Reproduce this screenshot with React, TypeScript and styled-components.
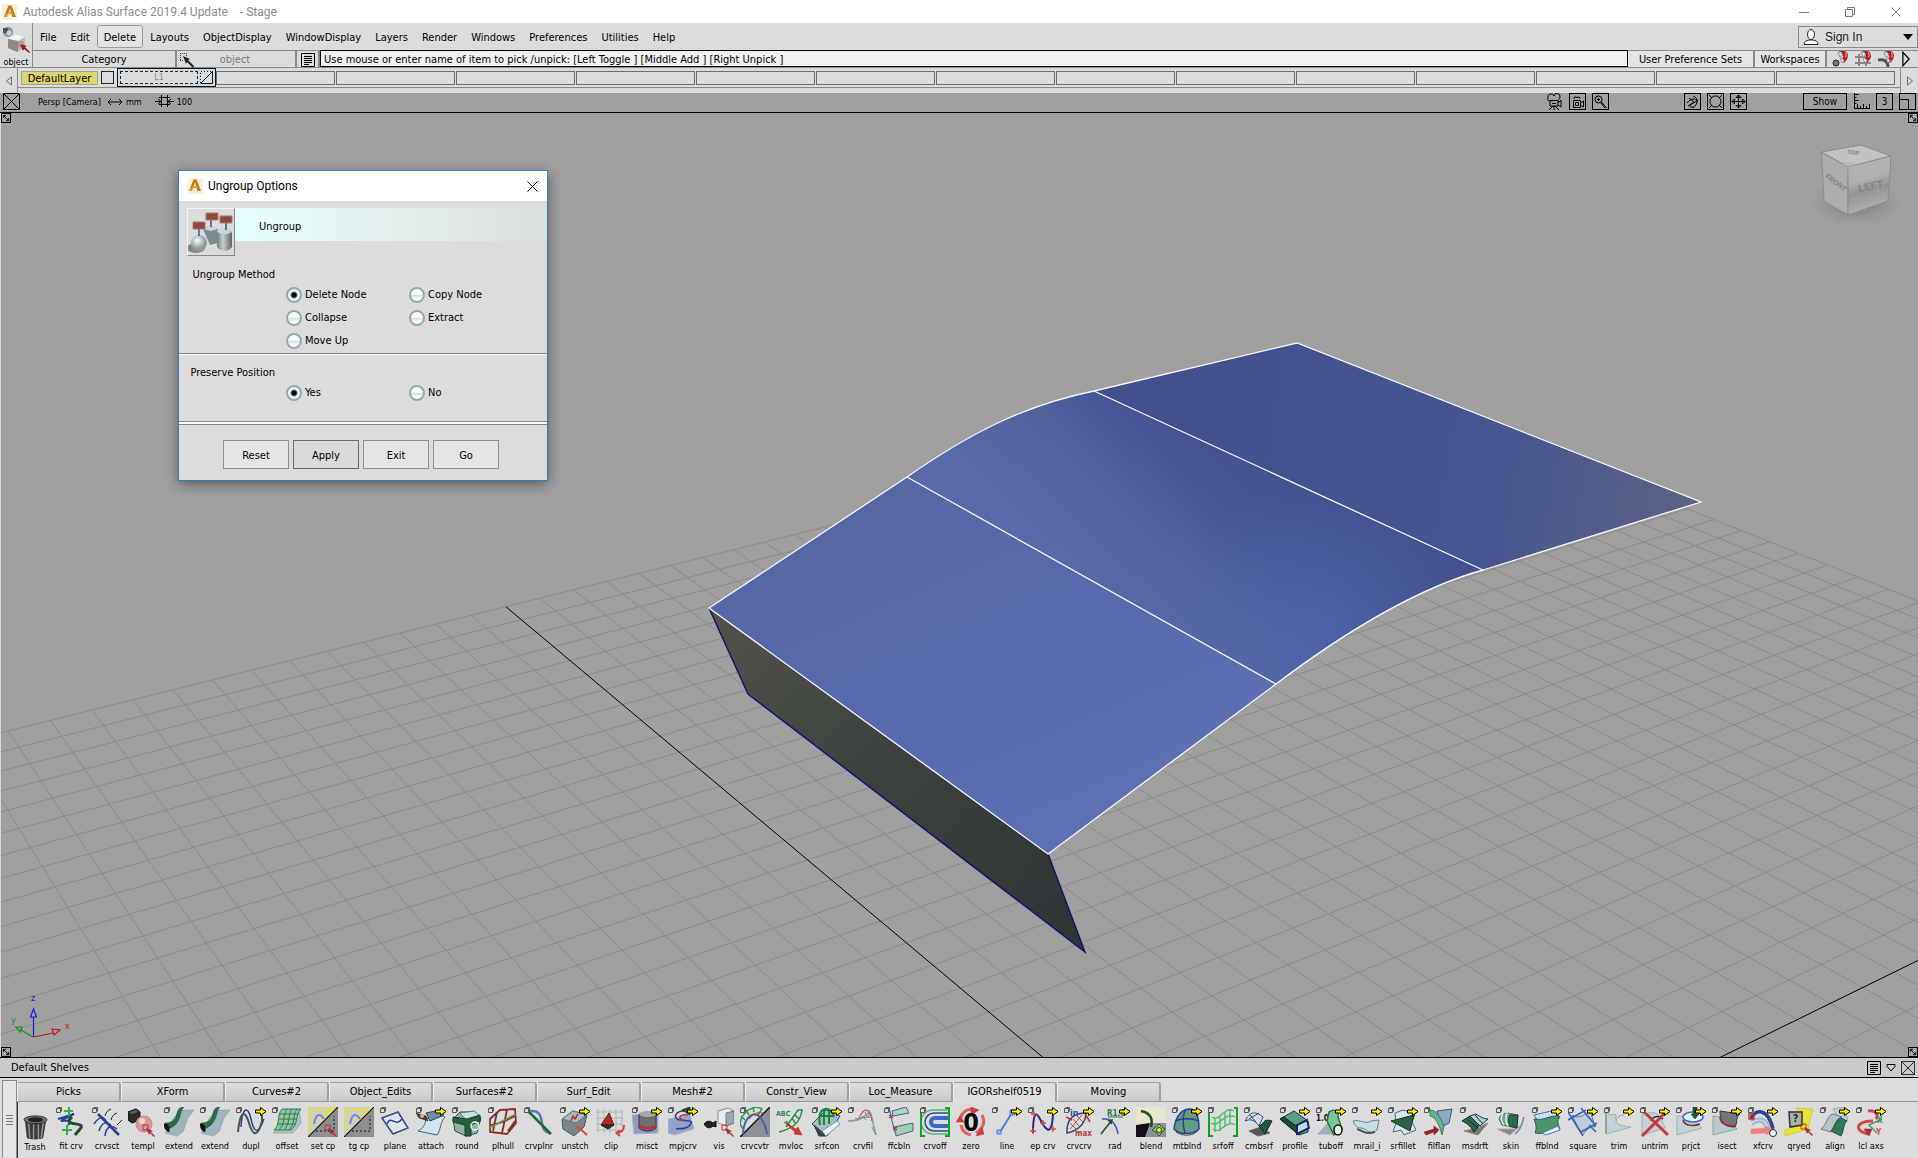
import React from "react";
import styled, { createGlobalStyle, css } from "styled-components";

const UI = `"DejaVu Sans Condensed", "DejaVu Sans", sans-serif`;
const TITLE = `Roboto, "Open Sans", sans-serif`;

const Global = createGlobalStyle`
  * { box-sizing: border-box; }
  html, body { margin: 0; padding: 0; }
  body { font: 11px/14px ${UI}; color: #000; background: #dcdcdc; }
  button, input { font: inherit; color: inherit; border-radius: 0; margin: 0; }
  button { padding: 0; background: none; border: 0; }
  svg { display: block; flex: none; }
`;

const App_ = styled.div`
  display: flex;
  flex-direction: column;
  height: 100vh;
  overflow: hidden;
`;

/* ---------- window title ---------- */
const TitleBar = styled.header`
  display: flex;
  align-items: center;
  height: 23px;
  padding: 0 2px;
  gap: 5px;
  background: #fff;
  flex: none;
`;
const Title = styled.h1<{ $dark?: boolean }>`
  margin: 0;
  flex: 1;
  font: 12px/16px ${TITLE};
  white-space: pre;
  color: ${(p) => (p.$dark ? "#000" : "#8c8c8c")};
`;
const WindowButton = styled.button`
  display: flex;
  align-items: center;
  justify-content: center;
  width: 41px;
  height: 20px;
`;

/* ---------- menu and prompt rows ---------- */
const TopArea = styled.div`
  display: flex;
  height: 45px;
  flex: none;
  background: #dcdcdc;
  border-bottom: 1px solid #8a8a8a;
`;
const PickTool = styled.button`
  display: flex;
  flex-direction: column;
  align-items: center;
  justify-content: space-between;
  width: 33px;
  padding: 2px 0 0;
  font-size: 9px;
  line-height: 10px;
  border-right: 1px solid #8a8a8a;
`;
const Rows = styled.div`
  display: flex;
  flex-direction: column;
  flex: 1;
  min-width: 0;
`;
const MenuRow = styled.nav`
  display: flex;
  align-items: center;
  justify-content: space-between;
  height: 27px;
`;
const MenuList = styled.div`
  display: flex;
`;
const MenuItem = styled.button<{ $hot?: boolean }>`
  height: 23px;
  padding: 2px 6px 0;
  border: 1px solid transparent;
  border-radius: 3px;
  ${(p) =>
    p.$hot &&
    css`
      background: #e4e4e4;
      border-color: #9a9a9a;
    `}
`;
const SignIn = styled.button`
  display: flex;
  align-items: center;
  gap: 6px;
  width: 120px;
  height: 22px;
  padding: 0 4px;
  font: 12px/16px "Liberation Sans", Arial, sans-serif;
  border: 1px solid #8a8a8a;
  color: #222;
  span { flex: 1; text-align: left; }
`;
const PromptRow = styled.div`
  display: flex;
  flex: 1;
  min-height: 0;
`;
const PromptCell = styled.button<{ $w: number; $dim?: boolean; $lit?: boolean }>`
  display: flex;
  align-items: center;
  justify-content: center;
  width: ${(p) => p.$w}px;
  flex: none;
  padding: 2px 0 0;
  border-top: 1px solid #8a8a8a;
  border-right: 2px solid #8a8a8a;
  color: ${(p) => (p.$dim ? "#7a7a7a" : "#000")};
  background: ${(p) => (p.$lit ? "#e5e5e5" : "transparent")};
  svg { margin: 0 2px; }
  span { flex: 1; padding-right: 22px; }
`;
const PromptInput = styled.input`
  flex: 1;
  min-width: 0;
  padding: 2px 3px 0;
  border: 1px solid #000;
  background: #f1f1f1;
`;
const SnapGroup = styled.div`
  display: flex;
  align-items: center;
  gap: 5px;
  width: 91px;
  padding: 0 5px;
  border-top: 1px solid #8a8a8a;
`;

/* ---------- layer row ---------- */
const LayerRow = styled.div`
  display: flex;
  height: 25px;
  flex: none;
  background: #dcdcdc;
`;
const Scroller = styled.button<{ $right?: boolean }>`
  display: flex;
  align-items: center;
  justify-content: center;
  width: 18px;
  flex: none;
  border: 0 solid #8a8a8a;
  border-width: ${(p) => (p.$right ? "0 0 0 1px" : "0 1px 0 0")};
`;
const Layers = styled.div`
  display: flex;
  align-items: center;
  flex: 1;
  min-width: 0;
  height: 20px;
  padding: 0 4px 0 3px;
  border-bottom: 1px solid #8a8a8a;
`;
const DefaultLayer = styled.button`
  width: 77px;
  height: 14px;
  padding-top: 1px;
  line-height: 11px;
  background: #dcd66c;
  border: 1px solid #a0a0a0;
`;
const LayerCheck = styled.input`
  appearance: none;
  width: 13px;
  height: 13px;
  margin: 0 3px;
  border: 1px solid #222;
  flex: none;
`;
const ActiveLayer = styled.button`
  display: flex;
  width: 99px;
  height: 19px;
  padding: 2px;
  flex: none;
  border: 1px solid #111;
  background: #c3dbee;
  color: #8a8a8a;
  font-size: 9px;
  span {
    flex: 1;
    line-height: 11px;
    background: #dcdcdc;
    border: 1px dashed #222;
  }
  svg { background: #dcdcdc; margin-left: 2px; }
`;
const LayerSlot = styled.button`
  flex: 1;
  height: 14px;
  margin-right: 1px;
  border: 1px solid #6e6e6e;
`;

/* ---------- viewport ---------- */
const ViewHeader = styled.div`
  display: flex;
  align-items: center;
  height: 20px;
  padding: 0 2px 2px 3px;
  flex: none;
  font-size: 9px;
  background: #a0a0a0;
  border-bottom: 1px solid #000;
`;
const ViewInfo = styled.div`
  display: flex;
  align-items: center;
  flex: 1;
  gap: 3px;
  padding-left: 18px;
`;
const InfoText = styled.span<{ $gap?: boolean }>`
  margin-right: ${(p) => (p.$gap ? 10 : 3)}px;
`;
const ToolSet = styled.div<{ $space: number }>`
  display: flex;
  gap: 6px;
  margin-right: ${(p) => p.$space}px;
`;
const ViewButton = styled.button<{ $w?: number; $bare?: boolean }>`
  display: flex;
  align-items: center;
  justify-content: center;
  width: ${(p) => p.$w ?? 17}px;
  height: 17px;
  font-size: 10px;
  border: ${(p) => (p.$bare ? "0" : "1px solid #000")};
`;
const Stage = styled.main`
  position: relative;
  flex: 1;
  min-height: 0;
  background: #a0a0a0;
  border-left: 1px solid #d8d8d8;
`;
const Scene = styled.svg`
  width: 100%;
  height: 100%;
`;
const Corner = styled.button<{ $v: "top" | "bottom"; $h: "left" | "right" }>`
  position: absolute;
  ${(p) => p.$v}: 0;
  ${(p) => p.$h}: 0;
  border: 1px solid #000;
  background: #a8a8a8;
`;
const CubeHolder = styled.div`
  position: absolute;
  top: 17px;
  right: 10px;
`;

/* ---------- dialog ---------- */
const Dialog = styled.section`
  position: absolute;
  left: 177px;
  top: 57px;
  width: 370px;
  border: 1px solid #2f7fc0;
  background: #dcdcdc;
  box-shadow: 0 3px 12px rgba(0, 0, 0, 0.45);
`;
const DialogTitle = styled.header`
  display: flex;
  align-items: center;
  height: 30px;
  gap: 5px;
  padding: 0 0 0 8px;
  background: #fff;
`;
const DialogClose = styled.button`
  display: flex;
  justify-content: center;
  width: 30px;
`;
const Banner = styled.div`
  display: flex;
  height: 56px;
  padding: 7px 0 0 8px;
`;
const ToolTile = styled.div`
  width: 48px;
  height: 48px;
  border: 1px solid;
  border-color: #f4f4f4 #8a8a8a #8a8a8a #f4f4f4;
`;
const BannerText = styled.h2`
  flex: 1;
  height: 33px;
  margin: 0;
  padding: 0 24px;
  font: 11px/38px ${UI};
  background: linear-gradient(90deg, #e6fffe, #e4eeed 50%, #dcdede);
`;
const Options = styled.fieldset<{ $h: number }>`
  display: grid;
  grid-template-columns: 107px 123px 1fr;
  grid-template-rows: 16px;
  grid-auto-rows: 23px;
  height: ${(p) => p.$h}px;
  margin: 0;
  min-width: 0;
  padding: 10px 0 0;
  border: 0;
  legend {
    grid-column: 1 / -1;
    float: left;
    width: 96px;
    padding: 0;
    line-height: 16px;
    text-align: right;
    white-space: nowrap;
  }
`;
const Choice = styled.label<{ $col: number }>`
  grid-column: ${(p) => p.$col};
  display: flex;
  align-items: center;
  gap: 3px;
  height: 23px;
  input {
    appearance: none;
    width: 16px;
    height: 16px;
    border: 2px solid #9aa6a9;
    border-radius: 50%;
    background: linear-gradient(#f4fbfb 45%, #cfdcdc 52%, #effcfb 75%);
  }
  input:checked {
    background: radial-gradient(circle, #000 2px, #e8f6f5 4px);
  }
`;
const Rule = styled.hr<{ $double?: boolean }>`
  height: ${(p) => (p.$double ? 4 : 2)}px;
  margin: 0;
  border: 0;
  border-top: 1px solid #858585;
  border-bottom: ${(p) => (p.$double ? "1px solid #858585" : "0")};
  background: #f4ffff;
`;
const Actions = styled.div`
  display: flex;
  gap: 4px;
  padding: 15px 48px 11px 44px;
`;
const ActionButton = styled.button<{ $on?: boolean }>`
  flex: 1;
  height: 29px;
  padding-top: 3px;
  border: 1px solid ${(p) => (p.$on ? "#6a6a6a" : "#8f8f8f")};
  background: ${(p) => (p.$on ? "#dadada" : "#e5e5e5")};
`;

/* ---------- shelves ---------- */
const ShelfTitle = styled.header`
  display: flex;
  align-items: center;
  height: 21px;
  padding: 0 3px 0 11px;
  gap: 5px;
  flex: none;
  background: #cbcbcb;
  border-top: 1px solid #000;
  border-bottom: 1px solid #000;
  h2 { flex: 1; margin: 0; font: inherit; }
`;
const Shelf = styled.div`
  display: flex;
  height: 80px;
  flex: none;
  padding: 2px 0 0 2px;
  background: #dcdcdc;
`;
const Grip = styled.div`
  display: flex;
  align-items: center;
  justify-content: center;
  width: 15px;
  border: 1px solid #8a8a8a;
  border-bottom: 0;
  background: #e4e4e4;
`;
const ShelfBody = styled.div`
  flex: 1;
  min-width: 0;
  padding-top: 2px;
`;
const Tabs = styled.div`
  display: flex;
  height: 20px;
  &::after {
    content: "";
    flex: 1;
    border-bottom: 1px solid #9a9a9a;
  }
`;
const Tab = styled.button<{ $on?: boolean }>`
  width: 104px;
  flex: none;
  border: 1px solid #a0a0a0;
  border-left-color: #f0f0f0;
  border-right-width: 2px;
  border-top-right-radius: 3px;
  border-bottom-color: ${(p) => (p.$on ? "transparent" : "#9a9a9a")};
  background: ${(p) => (p.$on ? "#dedede" : "linear-gradient(#dedede, #cacaca)")};
`;
const Tools = styled.div`
  display: flex;
  height: 56px;
  box-shadow: inset 1px 0 #333;
`;
const Tool = styled.button<{ $low?: boolean }>`
  display: flex;
  flex-direction: column;
  align-items: center;
  width: 36px;
  flex: none;
  gap: ${(p) => (p.$low ? 1 : 3)}px;
  padding-top: ${(p) => (p.$low ? 9 : 5)}px;
  font-size: 9px;
  line-height: 12px;
  white-space: nowrap;
`;

/* ---------- drawings ---------- */
const Logo = () => (
  <svg width="16" height="16" viewBox="0 0 16 16">
    <rect width="16" height="16" fill="#fdeedd" />
    <path d="M2 13 6.500 1.500h3L14 13h-3.500L9.500 10H7l2-2.500L8 4.500 5 13z" fill="#c67a14" />
    <path d="M2 13 6.500 8l3.500 0 1 2H7l-3.500 3z" fill="#efa733" />
  </svg>
);
const XIcon = ({ s = 11, c = "#000" }: { s?: number; c?: string }) => (
  <svg width={s} height={s} viewBox="0 0 11 11" stroke={c} fill="none">
    <path d="M.5.5l10 10M10.500.5l-10 10" />
  </svg>
);
const CrossBox = ({ s }: { s: number }) => (
  <svg width={s} height={s} viewBox="0 0 17 17" stroke="#000" fill="none">
    <path d="M.5.5h16v16H.5zM1 1l15 15M16 1 1 16" />
  </svg>
);
const ListIcon = () => (
  <svg width="14" height="14" viewBox="0 0 14 14" stroke="#000" fill="none">
    <path d="M.5.5h13v13H.5zM3 3.500h8M3 5.500h8M3 7.500h8M3 9.500h8M3 11.500h5" />
  </svg>
);
const Tri = ({ left, big }: { left?: boolean; big?: boolean }) => (
  <svg width={big ? 10 : 8} height={big ? 16 : 10} viewBox="0 0 8 12" fill="none" stroke={big ? "#000" : "#666"} preserveAspectRatio="none">
    <path d={left ? "M6.500 1v10L1.500 6z" : "M1.500 1v10l5-5z"} />
  </svg>
);
const CornerIcon = () => (
  <svg width="8" height="8" viewBox="0 0 9 9" stroke="#000" fill="none">
    <path d="M1.500 4.500v-3h3M1.500 1.500l6 6M7.500 4.500v3h-3" />
  </svg>
);
const Magnet = ({ kind }: { kind: number }) => (
  <svg width="18" height="16" viewBox="0 0 18 16" fill="none">
    {kind === 0 && <circle cx="4" cy="12" r="3" fill="#777" stroke="#222" />}
    {kind === 1 && <path d="M4 3v12M11 3v12M0 6h16M0 12h16" stroke="#888" strokeWidth="2" />}
    {kind === 2 && <path d="M0 9c6-1 10 1 10 7" stroke="#555" strokeWidth="3" />}
    <path d="M7.500 0.500C11-.5 16 0 15.500 5c0 3-2 5-3.500 6.500L9.500 9C12 6.500 12.500 4 10 3.500z" fill="#c41616" stroke="#6a1010" strokeWidth="0.500" />
    <path d="M13 1.500c1.500 1 1.500 3 .5 5" stroke="#ff8a80" strokeWidth="1.200" />
    <path d="M6 1.500 9 .5l2 3.500-3 2.500zM8 8l2-1 2.500 2.500L10 12z" fill="#d4d6e6" stroke="#667" strokeWidth="0.600" />
  </svg>
);

const HORIZON = -480;
const VP_A = 4860;
const VP_B = -789;
const gridLines = (() => {
  const out: { d: string; axis: boolean }[] = [];
  const edgeSlope = 0.3995;
  for (let j = 0; j <= 46; j++) {
    const h = 1 / (8.244e-4 - j * 0.1263e-4);
    const m = h / VP_A;
    const x = (h - edgeSlope * -VP_B) / (edgeSlope + m);
    out.push({ d: `M0 ${HORIZON + h}L${x} ${HORIZON + h - m * x}`, axis: j === 32 });
  }
  const m0 = 1213 / VP_A;
  for (let k = -14; k <= 32; k++) {
    const x = VP_A - 1 / (2.2967e-4 + k * 0.01812e-4);
    const y = HORIZON + m0 * (VP_A - x);
    const t = (1200 - HORIZON) / (y - HORIZON);
    out.push({ d: `M${x} ${y}L${VP_B + (x - VP_B) * t} 1200`, axis: k === 0 });
  }
  return out.sort((a, b) => Number(a.axis) - Number(b.axis));
})();

const BEND = "M907 477C970 433 1025 405 1094 391L1483 570C1422 587 1353 626 1276 684z";

const SceneArt = () => (
  <Scene viewBox="1 113 1917 944" preserveAspectRatio="xMidYMid slice">
    <defs>
      <linearGradient id="lower" gradientUnits="userSpaceOnUse" x1="900" y1="480" x2="1060" y2="850">
        <stop offset="0" stopColor="#5766a4" />
        <stop offset="0.5" stopColor="#5969ae" />
        <stop offset="1" stopColor="#6070b4" />
      </linearGradient>
      <linearGradient id="bend" gradientUnits="userSpaceOnUse" x1="1090" y1="600" x2="1240" y2="440">
        <stop offset="0" stopColor="#5969aa" />
        <stop offset="0.350" stopColor="#5564a0" />
        <stop offset="0.700" stopColor="#475698" />
        <stop offset="1" stopColor="#43518f" />
      </linearGradient>
      <linearGradient id="upper" gradientUnits="userSpaceOnUse" x1="1100" y1="400" x2="1700" y2="500">
        <stop offset="0" stopColor="#434f8c" />
        <stop offset="0.650" stopColor="#465493" />
        <stop offset="0.800" stopColor="#4f5b8a" />
        <stop offset="1" stopColor="#5c6383" />
      </linearGradient>
      <radialGradient id="glow" gradientUnits="userSpaceOnUse" cx="1320" cy="630" r="150">
        <stop offset="0" stopColor="#4f66b2" stopOpacity="0.650" />
        <stop offset="1" stopColor="#4f66b2" stopOpacity="0" />
      </radialGradient>
      <linearGradient id="side" gradientUnits="userSpaceOnUse" x1="720" y1="620" x2="1050" y2="920">
        <stop offset="0" stopColor="#505249" />
        <stop offset="0.5" stopColor="#3d4240" />
        <stop offset="1" stopColor="#303537" />
      </linearGradient>
    </defs>
    {gridLines.map((l, i) => (
      <path key={i} d={l.d} stroke={l.axis ? "#000" : "#8b8b8b"} strokeWidth="1" />
    ))}
    <path d="M709 608 748 694 1085 952 1048 854z" fill="url(#side)" />
    <path d="M709 608 748 694 1085 952 1048 854" fill="none" stroke="#14146e" strokeWidth="1.500" />
    <path d="M709 608 907 477 1276 684 1048 854z" fill="url(#lower)" />
    <path d={BEND} fill="url(#bend)" />
    <path d={BEND} fill="url(#glow)" />
    <path d="M1094 391 1297 343 1701 502 1483 570z" fill="url(#upper)" />
    <path
      d="M709 608 907 477C970 433 1025 405 1094 391L1297 343 1701 502 1483 570C1422 587 1353 626 1276 684L1048 854zM907 477 1276 684M1094 391 1483 570"
      fill="none"
      stroke="#f4f6ff"
      strokeWidth="1.300"
    />
    <g fill="none" strokeWidth="1.200">
      <path d="M33.500 1037v-20M30.500 1017h6l-3-8z" stroke="#1a1ae0" />
      <path d="M34 1037l19-4M52 1029l8 1-6 5z" stroke="#c01818" />
      <path d="M33 1037l-12-7M16 1027l6 0-2 5z" stroke="#189018" />
    </g>
    <g fontSize="9" fontFamily={UI}>
      <text x="31" y="1001" fill="#1a1ae0">z</text>
      <text x="65" y="1029" fill="#c01818">x</text>
      <text x="11" y="1023" fill="#189018">y</text>
    </g>
  </Scene>
);

const ViewCube = () => (
  <svg width="100" height="100" viewBox="1808 130 100 100">
    <defs>
      <radialGradient id="shade">
        <stop offset="0" stopColor="#6a6a6a" stopOpacity="0.9" />
        <stop offset="1" stopColor="#8a8a8a" stopOpacity="0" />
      </radialGradient>
      <linearGradient id="cl" x1="0" y1="0" x2="0.200" y2="1">
        <stop offset="0" stopColor="#b4b4b4" />
        <stop offset="0.450" stopColor="#b0b0b0" />
        <stop offset="0.650" stopColor="#959595" />
        <stop offset="1" stopColor="#b2b2b2" />
      </linearGradient>
    </defs>
    <ellipse cx="1856" cy="202" rx="46" ry="25" fill="url(#shade)" />
    <g stroke="#8c8c8c">
      <path d="M1821.500 152 1861 145l30 11-43 11z" fill="#c2c2c2" />
      <path d="M1821.500 152 1848 167v48l-24-14z" fill="#adadad" />
      <path d="M1848 167l43-11-3 45-40 14z" fill="url(#cl)" />
    </g>
    <path d="M1843 162h12v12h-12z" fill="#a9b0b5" opacity="0.5" />
    <g fontFamily="Liberation Sans Narrow, Liberation Sans, Arial, sans-serif" fontWeight="700" fill="#808286">
      <text fontSize="10" transform="translate(1859 192) rotate(-12)">LEFT</text>
      <text fontSize="7" transform="translate(1825 177) rotate(38)">FRONT</text>
      <text fontSize="6" transform="translate(1847 154) rotate(6)">TOP</text>
    </g>
  </svg>
);

/* shelf icon pieces */
const G = "#2f7a4f";
const N = "#2b3f9c";
const R = "#c23030";
const Square = () => <path d="M.5 1.500h4v4h-4zM1.500.500h4v4" fill="#ddd" stroke="#555" />;
const Yellow = () => (
  <path d="M19.500 3h5V.5L30 4.500 24.500 8.500V6h-5z" fill="#ffee00" stroke="#000" strokeWidth="1" />
);
const RedPtr = ({ x = 18, y = 18 }) => (
  <g transform={`translate(${x} ${y})`}>
    <path d="M0 0h5v5H0z" fill="none" stroke={R} />
    <path d="m3 3 7 3-2 1 4 4-1 1-4-4-1 2z" fill="#b03030" />
  </g>
);
const Split = () => (
  <>
    <path d="M0 0h30v30H0z" fill="#cfcfca" />
    <path d="M0 30 30 0v30z" fill="#8d8f94" />
    <path d="M0 30 30 0" stroke="#111" strokeWidth="1.200" />
  </>
);
const S = (d: string, c = N, w = 1.5) => <path d={d} stroke={c} strokeWidth={w} fill="none" />;
const F = (d: string, c: string, s = "#345", w = 1) => <path d={d} fill={c} stroke={s} strokeWidth={w} />;

type Item = [label: string, marks: string, art: React.ReactNode];
const extendArt = (
  <>
    {F("M10 10 18 3h12l-6 8-5 14-6 4-12-3z", "#9fb4bd", "#7f929b", 0.5)}
    {F("M1 16c8 0 11-4 12-10 1-4 3-6 7-6-4 4-3 10-6 14-2 4-5 6-10 8z", "#2f6b48", "#1b4a30", 0.5)}
    {F("M0 17c4-1 6 3 5 8-3-1-5-4-5-8z", "#0d1812", "#111", 0.5)}
  </>
);
const items: Item[] = [
  ["fit crv", "s", <>{S("M2 12 18 7 6 13C2 16 20 10 12 18", N, 2)}{S("M16 10c-12 10 16 4 8 12l-5 6", "#1f4a2c", 3)}{S("M13 0v9M8 4h9M11 18v10M6 23h10", "#35b045", 2)}</>],
  ["crvsct", "s", <>{S("M6 7 27 28", N, 2.5)}{S("M2 17C8 8 12 10 14 14M7 24C10 14 16 14 19 19M13 29c1-9 6-12 12-7")}{S("M13 9c1-4 3-6 6-7M19 13c1-4 3-6 6-7M25 18l5-5", "#222", 1)}</>],
  ["templ", "", <>{F("M0 5 8 2l4 3v8l-8 3-4-3z", "#2b2b2b", "#111")}{F("M0 5 8 2l4 3-8 3z", "#555", "#222")}<circle cx="16" cy="17" r="8" fill="#d99a9a" stroke="#b88" /><circle cx="14" cy="14" r="3" fill="#f5d2d2" /><RedPtr x={15} y={18} /></>],
  ["extend", "s", extendArt],
  ["extend", "s", extendArt],
  ["dupl", "sa", <>{S("M5 20C6 0 12-2 15 12s7 16 13 0")}{S("M2 25C4 4 9 2 13 16s9 14 13-2V8", "#44584a", 2)}</>],
  ["offset", "s", <>{F("M1 26h20l8-10-2-13-12 8z", "#b3c0c6", "#9aa")}{F("M10 2h19c-6 6-2 14-10 21H2c7-6 2-14 8-21z", "#8cc7a0", G)}{S("M7 7h19M6 12h19M5 17h18M15 2c-5 7-1 14-8 21M20 2c-5 7-1 14-8 21M25 2c-5 7-1 14-8 21", G, 1)}</>],
  ["set cp", "", <><Split />{S("M2 25V3l23-1L13 14", "#e8e040", 2)}{S("M6 17C8 6 12 6 16 12", "#7088c8", 2)}<path d="M8 24h18V9" stroke="#111" fill="none" strokeDasharray="2 2" /><RedPtr x={17} y={18} /></>],
  ["tg cp", "", <><Split />{S("M2 25V3l23-1L13 14", "#e8e040", 2)}{S("M6 17C8 6 12 6 16 12", "#7088c8", 2)}<path d="M8 24h18V9" stroke="#111" fill="none" strokeDasharray="2 2" /></>],
  ["plane", "s", <>{F("M2 11 18 5l10 16-15 6z", "#dfe5ec", "#334a8c", 1.5)}{S("M7 17c4-10 8 4 15-5", N, 1.5)}</>],
  ["attach", "sa", <>{F("M10 12c8-1 12-6 19-2-5 5-4 13-8 18L2 24c6-3 7-7 8-12z", "#cfe6f2", "#46648c")}{F("M10 6 24 3l4 5-14 6z", "#6f8fa5", "#345")}{F("M0 6 10 9l2 5L3 11z", "#4b3b30", "#222", 0.5)}<circle cx="6" cy="9" r="2" fill="#f0b070" /></>],
  ["round", "s", <>{F("M1 12 8 5h14l7 6-4 15-11 3L3 24z", "#8fb5a5", "#345")}{F("M8 6 22 4l6 5-13 5z", "#c6e3ea", "#578")}{F("M1 10 15 12 28 8v6l-9 4v11h-6V18L1 15z", "#27613c", "#183e26")}<circle cx="23" cy="19" r="4" fill="none" stroke="#e8f4f4" strokeWidth="1.500" /></>],
  ["plhull", "s", <>{S("M2 12 12 3l15-1 1 14-9 11-17-2zM5 24 9 5M14 26l5-23M3 18l12-3 12-6M20 24l7-10", "#8c2b2b", 1.8)}{S("M1 21 28 7", "#6b9b3a", 1.5)}</>],
  ["crvplnr", "s", <>{S("M6 4c18-2 6 20 20 22", "#5a76b8", 2.500)}{S("M3 3 27 27", "#1f6b35", 2.500)}</>],
  ["unstch", "sa", <>{F("M2 12 13 4 27 8 24 20 14 29 3 22z", "#79878c", "#455")}{F("M2 12 13 4 27 8 16 16z", "#a9bac0", "#677")}{S("M11 14l2-5 2 3 3-5", R, 1.500)}{S("M17 19l10 9M17 19l3 5", "#e04848", 2)}</>],
  ["clip", "", <>{S("M2 2v24M8 2v24M14 2v24M20 2v24M26 2v18M0 5h27M0 11h27M0 17h27M0 23h20", "#aab4b8", 1)}{F("M5 18 13 6l5 12z", "#b02a2a", "#711")}{F("M5 18h13l-6 4z", "#333", "#222")}{S("M28 18c0 6-4 8-8 8m0 0 4-3m-4 3 4 3", "#e04040", 2)}</>],
  ["misct", "sa", <>{F("M0 8 26 6v20L2 27z", "#8f9cc4", "#a9b3d0")}{F("M7 7h17v14c-4 4-13 4-17 0z", "#6b6f73", "#333")}<ellipse cx="15.500" cy="7" rx="8.500" ry="3" fill="#a2a8ac" />{S("M7 18c4 4 13 4 17 0", R, 2.500)}</>],
  ["mpjcrv", "sa", <>{F("M0 12 22 8l4 14L6 28 0 26z", "#93a2c8", "#aab3d0")}{S("M22 4C6 2 4 12 12 13s14 0 10 5-10 3-14 4", N, 1.600)}{S("M20 8C10 7 10 12 16 14", R, 1.500)}{F("M14 3 22 0v8z", "#2a5a45", "#234")}</>],
  ["vis", "", <>{F("M14 4 24 1l6 3v12l-8 3-8-3z", "#e8edf0", "#889")}{F("M22 6 30 4v12l-8 3z", "#9aa7ae", "#778")}{F("M0 17c4-5 8-2 9-1l3-2v6l-3-1c-3 3-7 2-9-2z", "#222", "#111")}<RedPtr x={18} y={18} /></>],
  ["crvcvtr", "s", <><path d="M0 30 30 0v30z" fill="#8d8f94" /><path d="M0 30 30 0" stroke="#111" strokeWidth="1.500" />{S("M3 27C4 4 22-2 27 27", "#4763a8", 2)}{S("M3 22 0 17C2 2 16-2 22 2l-4 6M5 13 1 9M9 8 6 3M14 5l-1-5", "#2d9a45", 1.500)}{S("M16 6h8M9 12l6-6", R, 1)}</>],
  ["mvloc", "", <><text x="0" y="9" fontSize="7" fontWeight="700" fontFamily={UI} fill="#2b8a4a">ABC</text>{S("M3 25C14 22 24 18 26 3M10 20 22 3h5M14 19 10 14M19 16l-3-5M23 12l-4-4", "#2d8a45", 1.500)}{F("m8 15 12 7 2-2 4 8-8-1 1-2z", "#c93838", "#a22", 0.500)}</>],
  ["srfcon", "sa", <>{F("M0 17 14 3l14 6-13 20z", "#a8bdc9", "#345")}{F("M2 18 14 29l-7 0z", "#444", "#333")}{S("M8 18C4-2 20-2 22 10M12 18V3M17 17V3M8 9h14", "#14863a", 2)}{F("M10 24 25 14l3 3-14 12z", "#e8f4fa", "#69a")}</>],
  ["crvfil", "s", <>{S("M0 14c12 0 16-4 20-8s4 10 8 22", "#76a88a", 1.500)}{S("M11 11C16 0 22 0 24 14", "#e05050", 1.300)}{S("M14 9l4 4M17 5l3 6M21 3v8M7 12l14-2M24 20l4 8", "#6787b4", 1)}</>],
  ["ffcbln", "s", <>{F("M8 4 22 0l3 6-16 3z", "#a9d6c6", "#46648c")}{F("M10 20 29 16v8l-17 5z", "#9fcfb0", "#46648c")}{S("M6 4c1 8 3 14 6 23", "#5573b0", 1.300)}{S("M5 8l4 3M5 11l4-3M9 20l4 3M9 23l4-3", R, 1.200)}</>],
  ["crvoff", "s", <>{S("M28 6H14a9 9 0 0 0 0 18h14", "#28508f", 1.500)}{S("M28 11H15a4 4 0 0 0 0 8h13", "#3d66d0", 4)}{S("M28 3H13a12 12 0 0 0 0 24h15", "#62b07a", 1.500)}{S("M5 4H1v25h4M25 1h4v28h-4", "#14a51c", 2)}</>],
  ["zero", "", <>{S("M4 12C6 4 12 2 17 2M26 8c4 8 0 14-6 18M5 18c1 6 4 9 10 10", "#e06060", 3)}{F("M15 0l8 3-8 5zM20 29l8-2-2-7zM0 15l8 0-4-6z", "#cf3c3c", "#b33", 0.500)}<text x="15" y="24" textAnchor="middle" fontSize="25" fontWeight="700" fontFamily={UI} fill="#000">0</text></>],
  ["line", "sa", <>{S("M8 25 20 6", "#4a72e0", 1.800)}{F("M5 23h4v4H5zM18 3h5v5h-5z", "#a8c0f5", "#4a72e0")}</>],
  ["ep crv", "sa", <>{S("M5 26C5 6 8 4 12 12s12 22 13-6", "#2a2a80", 2)}{S("M2 24h6M5 21v6M3 7h6M6 4v6M12 16h6M15 13v6M22 22h6M25 19v6", "#d04848", 1.300)}</>],
  ["crvcrv", "sa", <><text x="6" y="9" fontSize="9" fontWeight="700" fontFamily={UI} fill="#3a4ea8">in</text>{S("M3 24C3 10 12 6 22 6 22 16 14 24 3 26z", "#334a7c", 1.500)}{S("M6 22 18 8M6 16l6 6M9 12l6 7M13 9l6 6", "#b54848", 1)}{S("M2 10 8 13M20 5l6 10", R, 1.500)}<text x="11" y="29" fontSize="8" fontWeight="700" fontFamily={UI} fill="#b83a3a">max</text></>],
  ["rad", "a", <><text x="7" y="9" fontSize="8" fontWeight="700" fontFamily={UI} fill="#2f7a3f">R1.0</text>{S("M8 10h15", G, 1)}{S("M2 12c8-1 14 4 16 15", "#4763b8", 1.600)}{S("M1 27 12 13M8 14l4-1-1 4", "#25482f", 1.500)}</>],
  ["blend", "", <><path d="M0 0h30v16H0z" fill="#e6e5cf" /><path d="M14 16h16v14H6z" fill="#8d9096" /><path d="M0 18 14 16 9 30H0z" fill="#111" />{S("M5 4c10 2 12 8 10 16", "#1d4a24", 2.500)}{F("m23 17 3 3 3 2-3 3-3 4-3-4-4-2 4-3z", "#88cc88", "#175c25")}<circle cx="23" cy="23" r="2.500" fill="#f5e535" stroke="#332" /></>],
  ["mtblnd", "sa", <>{F("M2 22C4 6 12 2 18 2s9 8 9 20c-6 6-20 6-25 0z", "#629c82", "#2b3f9c", 1.500)}{S("M3 14c7-3 17-3 24 0M13 3c-3 8-2 16 0 23", N, 1.500)}{S("M4 25c8 5 18 4 22-2", "#444", 1)}</>],
  ["srfoff", "s", <>{S("M4 10C12 16 16-2 26 4M3 16C11 22 16 4 27 10M5 22c8 6 13-10 22-4M7 11v14M12 10v14M17 5v15M22 3v14", "#4dbb72", 1.400)}{S("M4 1H1v28h4M26 1h3v28h-4", "#12a01c", 2)}</>],
  ["cmbsrf", "s", <>{F("M5 24 17 20 26 26l-12 3z", "#555", "#666")}{F("M1 14C6 4 12 4 19 10l-4 9C10 12 6 12 1 14z", "#d2dde6", "#334a8c")}{F("M15 19c6-2 3-8 13-5l-7 13c-2-3-4-6-6-8z", "#1f5a3a", "#123")}{S("M6 8l6 7M5 12l10-6", "#334a8c", 1)}</>],
  ["profile", "sa", <>{F("M0 12 14 4l14 10v11l-9 3z", "#5ca080", "#1d3048")}{F("M0 12 19 28v-7L4 10z", "#1f4a33", "#123")}{F("M17 27V18l10-5 2 8z", "#bfe0d2", "#14257c", 2)}</>],
  ["tuboff", "sa", <><text x="0" y="14" fontSize="8" fontWeight="700" fontFamily={UI} fill="#111">1.0</text>{F("M2 27 14 14l12 6-4 7z", "#9db0ba", "#9ab")}{F("M13 5c6-4 10 0 9 5l4 12-8 6-7-14z", "#7fc49a", "#1e7a38", 1.500)}<ellipse cx="22" cy="23" rx="4" ry="5" fill="#e8f8ee" stroke="#111" strokeWidth="1.500" /></>],
  ["mrail_i", "sa", <>{F("M1 14c8-2 12 4 18 0l8-1-2 10c-8 6-10-2-16-2-4 0-6-2-8-7z", "#c9dde8", "#6b8090")}{S("M5 22c6 2 10 6 18 3", "#555", 2)}</>],
  ["srfillet", "sa", <>{F("M7 6 15 3l12 4-3 8 4 8-12 5-3-5-8 2 3-9z", "#d7e5ec", "#4a6a8c")}{F("M3 14 26 8 22 24z", "#2b6244", "#173a26")}</>],
  ["filflan", "s", <>{F("M13 4 28 2l-3 14-8 4z", "#8fa9be", "#3a558a")}{F("M6 3c6 0 10 6 14 16l-2 9C15 16 11 10 6 9z", "#68b58a", "#3f7a5a")}{F("M0 25 10 22v-3l5 4-5 5v-3L2 28z", "#9c2424", "#711", 0.500)}</>],
  ["msdrft", "s", <>{F("M4 24 20 20 28 16 18 28z", "#777", "#888")}{F("M2 14 10 9l10 8-6 8C10 18 6 16 2 14z", "#2d6b43", "#123")}{F("M10 9 16 7c5 3 7 5 12 5l-8 7z", "#b3d0dc", "#234")}{S("M8 13l10 8M15 8l8 9", "#123", 1)}</>],
  ["skin", "s", <>{F("M1 22 18 22 24 19 14 28z", "#888", "#aaa")}{F("M3 12C5 4 12 6 22 8l-2 13L6 18z", "#71a890", "#567")}{F("M14 8h8l-1 13-7-2c-2-4-2-7 0-11z", "#277044", "#234")}{S("M7 6C4 10 5 14 8 18M11 6c-2 4-1 10 1 13", "#dcebf2", 1.500)}{S("M28 10c-2 8-4 14-9 17", "#7884a8", 1.500)}</>],
  ["ffblnd", "sa", <>{F("M2 8 24 3l4 8-22 3z", "#c8e2ee", "#4a6a9c")}{F("M2 12C12 14 18 8 27 9c-2 5-1 9 1 13-8 0-14 6-25 4 2-5 1-9-1-14z", "#4d9468", "#356")}{F("M10 26 26 19l2 4-14 5z", "#e0eef5", "#57a")}</>],
  ["square", "sa", <>{F("M4 8C12 14 18 4 23 6l4 14c-6-2-10 6-13 8z", "#bccdd8", "#678")}{S("M0 5 15 29M0 13 18 3M13 25 29 16M13 1l15 18M21 18l7 7", "#3a62c0", 1.600)}</>],
  ["trim", "sa", <>{F("M2 4c4 8 10 0 10 5s-2 10 15 11L2 27z", "#c4d3d9", "#9fb0b6")}{S("M2 27V6", "#8795a0", 1.500)}{S("M12 14c1-4 4-6 8-6", "#99a", 1)}</>],
  ["untrim", "sa", <>{F("M2 7c8 0 10-4 18 2l5 12L2 28z", "#c4d3d9", "#9fb0b6")}{S("M11 14c2-5 8-6 12-2", "#223", 1.500)}{S("M2 3 28 28M28 3 2 29", "#c83a3a", 3)}</>],
  ["prjct", "sa", <>{F("M1 9c8 0 14 2 25 12L1 28z", "#c4d3d9", "#9fb0b6")}<ellipse cx="17" cy="10" rx="10" ry="5" fill="#dff" stroke="#3d66c8" strokeWidth="1.500" />{S("M7 13c2 7 12 6 17 4", "#8c1f2a", 1.500)}{F("M17 0h4v7h2l-4 5-4-5h2z", "#1d5c36", "#123", 0.500)}</>],
  ["isect", "sa", <>{F("M1 9c8 0 18 4 24 13L1 28z", "#b9cad2", "#8fa0a6")}{F("M8 4 28 7c-5 4-2 8-5 13-8 0-15-2-15-16z", "#70777c", "#334")}{S("M8 10c0 6 6 9 15 9", "#b42432", 1.500)}</>],
  ["xfcrv", "sa", <>{S("M3 12C6 2 20 0 25 22", "#28468c", 3.500)}{S("M4 18c8-6 13-4 14 6M3 14c12-6 17 0 19 8", "#9fb4cc", 2)}{F("M3 22 18 21v-2l8 4-8 5v-2L3 27z", "#f08080", "#e88", 0.500)}{S("M1 7h5v5H1z", R, 1.300)}<circle cx="25" cy="26" r="3.500" fill="#fff" stroke="#222" /></>],
  ["qryed", "", <>{F("M13 1 29 2 24 22 1 29v-6l14-5z", "#e8e530", "#b8b520", 0.500)}{F("M5 5h13v13l-12 2z", "#aab0a8", "#333", 1.500)}<text x="9" y="15" fontSize="10" fontWeight="700" fontFamily={UI} fill="#222">?</text><RedPtr x={17} y={17} /></>],
  ["align", "sa", <>{F("M13 2 24 0 28 14l-8 0z", "#c0ccd2", "#9aa")}{F("M1 22c6-4 6-14 12-15l9 3C15 12 14 20 11 25z", "#b4c4ca", "#778")}{F("M11 24c5-5 5-12 10-13l6 3c-4 3-3 10-6 15z", "#2f7a50", "#245")}</>],
  ["lcl axs", "sa", <>{S("M12 4c8-1 11 4 8 8M17 14C4 14-2 20 6 25l6 2", "#d04848", 3)}{F("M8 22h8l-3 7z", "#b52a2a", "#922", 0.500)}{S("M26 12 13 18l8 8", "#48a068", 1.500)}<text x="21" y="16" fontSize="8" fontWeight="700" fontFamily={UI} fill="#2f9a55">X</text><text x="20" y="28" fontSize="8" fontWeight="700" fontFamily={UI} fill="#e04848">Y</text></>],
];

const TrashArt = () => (
  <svg width="25" height="29" viewBox="0 0 26 30">
    <path d="M2 10h22l-3 18c-4 2-13 2-17 0z" fill="#3a3a3a" />
    <path d="M6 13l1 15M11 14v15M16 14v15M21 12l-2 16" stroke="#999" strokeWidth="1.500" />
    <ellipse cx="13" cy="9" rx="12" ry="4" fill="#777" stroke="#333" />
    <ellipse cx="13" cy="9" rx="8" ry="2.500" fill="#222" />
  </svg>
);

const viewArt: Record<string, React.ReactNode> = {
  camera: <path d="M2 5a3 3 0 0 1 6-2 3 3 0 0 1 6 1c0 2-1 2-2 3v6H4V8C2 8 1 7 2 5zM4 7.500h8M6 10.500h4M12 10l3-3v7l-3-2M7 13l-4 4M9 13l4 4M8 13v4" />,
  film: <path d="M3.500 6.500h7v7h-7zM10.500 9l3-2v6l-3-2M4 5a1 1 0 0 1 3-1 1 1 0 0 1 3 1M5.500 8.500h3v3h-3z" />,
  zoom: <path d="M2 5.500a3.500 3.500 0 1 1 7 0 3.500 3.500 0 1 1-7 0M4 5.500h3M5.500 4v3M8.500 8l5 6M8 9l4 5" />,
  tumble: <path d="M2 9c4-5 8-5 11-2M8 2c6 2 5 8 0 12M4 4l5 4-5 4M3 12l9-5M5 13h4" />,
  rotate: <path d="M1 1l3 3M14 1l-3 3M1 14l3-3M14 14l-3-3M2 7.500a5.500 5.500 0 1 1 11 0 5.500 5.500 0 1 1-11 0" />,
  pan: <path d="M7.500 1v13M1 7.500h13M5 3.500l2.500-2.500L10 3.500zM5 11.500 7.500 14l2.500-2.500zM3.500 5 1 7.500 3.500 10zM11.500 5 14 7.500 11.500 10z" />,
  ruler: <path d="M1.500 0v15.500H17M1.500 1.500h4M1.500 4.500h2M1.500 7.500h4M1.500 10.500h2M4.500 15v-4M7.500 15v-2M10.500 15v-4M13.500 15v-2M16.500 15v-4" />,
  frame: <path d="M0 5.500h8.500V15" />,
};
const VB = ({ k, bare, label }: { k: string; bare?: boolean; label: string }) => (
  <ViewButton $bare={bare} aria-label={label}>
    <svg width={bare ? 17 : 15} height={bare ? 17 : 15} viewBox={bare ? "0 0 17 17" : "0 0 15 15"} stroke="#000" fill="none">
      {viewArt[k]}
    </svg>
  </ViewButton>
);

const menus = ["File", "Edit", "Delete", "Layouts", "ObjectDisplay", "WindowDisplay", "Layers", "Render", "Windows", "Preferences", "Utilities", "Help"];
const tabs = ["Picks", "XForm", "Curves#2", "Object_Edits", "Surfaces#2", "Surf_Edit", "Mesh#2", "Constr_View", "Loc_Measure", "IGORshelf0519", "Moving"];
const methods: [string, number][] = [["Delete Node", 2], ["Copy Node", 3], ["Collapse", 2], ["Extract", 3], ["Move Up", 2]];

const UngroupDialog = () => (
  <Dialog role="dialog" aria-label="Ungroup Options">
    <DialogTitle>
      <Logo />
      <Title as="h2" $dark>Ungroup Options</Title>
      <DialogClose aria-label="Close dialog"><XIcon /></DialogClose>
    </DialogTitle>
    <Banner>
      <ToolTile>
        <svg width="46" height="46" viewBox="0 0 46 46">
          <defs>
            <linearGradient id="cyl"><stop offset="0" stopColor="#6f7c80" /><stop offset="0.400" stopColor="#c4d0d2" /><stop offset="1" stopColor="#5b666a" /></linearGradient>
            <radialGradient id="ball" cx="0.400" cy="0.350"><stop offset="0" stopColor="#f8ffff" /><stop offset="1" stopColor="#8c9a9e" /></radialGradient>
          </defs>
          <ellipse cx="8" cy="39" rx="9" ry="5" fill="#6a7072" opacity="0.8" />
          <path d="M15 20 22 17l8 3v14l-8 2z" fill="#7d8a8e" />
          <path d="M15 20 22 17l8 3-7 2z" fill="#c9d5d8" />
          <path d="M29 22h15v16c-3 5-12 5-15 0z" fill="url(#cyl)" />
          <ellipse cx="36.500" cy="22" rx="7.500" ry="3" fill="#c9d5d8" />
          <circle cx="11" cy="34" r="8" fill="url(#ball)" />
          <path d="M11 20v7M23 11v7M38 14v7" stroke="#3a4ea0" strokeWidth="1.500" />
          <path d="M5 13h12v7H5zM18 4h12v7H18zM32 7h12v7H32z" fill="#8c4a3c" stroke="#a9786c" />
        </svg>
      </ToolTile>
      <BannerText>Ungroup</BannerText>
    </Banner>
    <Options $h={96}>
      <legend>Ungroup Method</legend>
      {methods.map(([m, c], i) => (
        <Choice key={m} $col={c}>
          <input type="radio" name="method" defaultChecked={i === 0} />
          {m}
        </Choice>
      ))}
    </Options>
    <Rule />
    <Options $h={66}>
      <legend>Preserve Position</legend>
      <Choice $col={2}><input type="radio" name="preserve" defaultChecked />Yes</Choice>
      <Choice $col={3}><input type="radio" name="preserve" />No</Choice>
    </Options>
    <Rule $double />
    <Actions>
      {["Reset", "Apply", "Exit", "Go"].map((b) => (
        <ActionButton key={b} $on={b === "Apply"}>{b}</ActionButton>
      ))}
    </Actions>
  </Dialog>
);

export default function App() {
  return (
    <App_>
      <Global />
      <TitleBar>
        <Logo />
        <Title>{"Autodesk Alias Surface 2019.4 Update    - Stage"}</Title>
        <WindowButton aria-label="Minimize">
          <svg width="10" height="10" stroke="#777"><path d="M0 5.500h10" /></svg>
        </WindowButton>
        <WindowButton aria-label="Restore">
          <svg width="10" height="10" stroke="#777" fill="none"><path d="M.5 2.500h7v7h-7zM2.500 2.500v-2h7v7h-2" /></svg>
        </WindowButton>
        <WindowButton aria-label="Close"><XIcon c="#777" s={10} /></WindowButton>
      </TitleBar>

      <TopArea>
        <PickTool>
          <svg width="28" height="29" viewBox="0 0 28 29">
            <circle cx="6" cy="7" r="5" fill="#8894a0" /><path d="M1 3h5v5H1z" fill="#4a5866" /><circle cx="7" cy="8" r="2.500" fill="#c9d4da" />
            <path d="M6 14 13 9l10 3v11l-8 4-9-4z" fill="#b9b9b9" /><path d="M6 14 13 9l10 3-7 4z" fill="#f2f2f2" /><path d="M6 14l10 2v11l-10-4z" fill="#8a8a8a" />
            <path d="M17 17h4v5h-4z" fill="none" stroke="#c66" /><path d="m18 19 7 2-2 1 5 5-1 1-5-4-1 2z" fill="#8c2020" />
          </svg>
          object
        </PickTool>
        <Rows>
          <MenuRow>
            <MenuList>
              {menus.map((m) => <MenuItem key={m} $hot={m === "Delete"}>{m}</MenuItem>)}
            </MenuList>
            <SignIn>
              <svg width="16" height="18" viewBox="0 0 16 18" fill="#f4f8ff" stroke="#222"><path d="M1 16.500c0-3 2-4 5-4.500h4c3 .5 5 1.500 5 4.500z" /><ellipse cx="8" cy="6.500" rx="3.500" ry="5" /></svg>
              <span>Sign In</span>
              <svg width="10" height="6"><path d="M0 0h10L5 6z" /></svg>
            </SignIn>
          </MenuRow>
          <PromptRow>
            <PromptCell $w={144}>Category</PromptCell>
            <PromptCell $w={120} $dim>
              <svg width="16" height="16" viewBox="0 0 16 16"><path d="M1 1.500h7M1.500 1v8M1 8.500h4M7.500 1v3" stroke="#333" strokeDasharray="1 1" fill="none" /><path d="m4 4 7 3-2 1 6 6-1 2-6-6-1 2z" fill="#222" /></svg>
              <span>object</span>
            </PromptCell>
            <PromptCell $w={23} aria-label="History"><ListIcon /></PromptCell>
            <PromptInput aria-label="Prompt line" readOnly value="Use mouse or enter name of item to pick /unpick: [Left Toggle ] [Middle Add ] [Right Unpick ]" />
            <PromptCell $w={127} $lit>User Preference Sets</PromptCell>
            <PromptCell $w={72} $lit>Workspaces</PromptCell>
            <SnapGroup><Magnet kind={0} /><Magnet kind={1} /><Magnet kind={2} /><Tri big /></SnapGroup>
          </PromptRow>
        </Rows>
      </TopArea>

      <LayerRow>
        <Scroller aria-label="Scroll left"><Tri left /></Scroller>
        <Layers>
          <DefaultLayer>DefaultLayer</DefaultLayer>
          <LayerCheck type="checkbox" aria-label="Layer visible" />
          <ActiveLayer>
            <span>L1</span>
            <svg width="13" height="13" stroke="#111" fill="none"><path d="M.5 12.500h12V0M1 12 12 1" /><path d="M.5 12V.5H12" strokeDasharray="1 2" /></svg>
          </ActiveLayer>
          {Array.from({ length: 14 }, (_, i) => <LayerSlot key={i} aria-label={`Layer slot ${i + 2}`} />)}
        </Layers>
        <Scroller $right aria-label="Scroll right"><Tri /></Scroller>
      </LayerRow>

      <ViewHeader>
        <CrossBox s={17} />
        <ViewInfo>
          <InfoText>Persp [Camera]</InfoText>
          <svg width="16" height="8" stroke="#000" fill="none"><path d="M1 4h14M4 1 1 4l3 3M12 1l3 3-3 3" /></svg>
          <InfoText $gap>mm</InfoText>
          <svg width="19" height="13" stroke="#000" fill="none"><path d="M6.500 0v12M12.500 0v12M4 2.500h11M4 9.500h11M0 6.500h5M14 6.500h5M3 4l3 2.500L3 9M16 4l-3 2.500L16 9" /></svg>
          <InfoText>100</InfoText>
        </ViewInfo>
        <ToolSet $space={75}>
          <VB k="camera" bare label="Camera" />
          <VB k="film" label="Film" />
          <VB k="zoom" label="Zoom" />
        </ToolSet>
        <ToolSet $space={56}>
          <VB k="tumble" label="Tumble" />
          <VB k="rotate" label="Look at" />
          <VB k="pan" label="Pan" />
        </ToolSet>
        <ToolSet $space={0}>
          <ViewButton $w={44}>Show</ViewButton>
          <VB k="ruler" bare label="Ruler" />
          <ViewButton>3</ViewButton>
          <VB k="frame" label="Maximize" />
        </ToolSet>
      </ViewHeader>

      <Stage>
        <SceneArt />
        <CubeHolder><ViewCube /></CubeHolder>
        <Corner $v="top" $h="left" aria-label="Resize top left"><CornerIcon /></Corner>
        <Corner $v="top" $h="right" aria-label="Resize top right"><CornerIcon /></Corner>
        <Corner $v="bottom" $h="left" aria-label="Resize bottom left"><CornerIcon /></Corner>
        <Corner $v="bottom" $h="right" aria-label="Resize bottom right"><CornerIcon /></Corner>
        <UngroupDialog />
      </Stage>

      <ShelfTitle>
        <h2>Default Shelves</h2>
        <button aria-label="Shelf list"><ListIcon /></button>
        <button aria-label="Collapse shelf"><svg width="10" height="8" fill="none" stroke="#000"><path d="M1 .5h8v2L5 7 1 2.500z" /></svg></button>
        <button aria-label="Close shelf"><CrossBox s={14} /></button>
      </ShelfTitle>
      <Shelf>
        <Grip><svg width="7" height="10" stroke="#777"><path d="M0 .5h7M0 3.500h7M0 6.500h7M0 9.500h7" /></svg></Grip>
        <ShelfBody>
          <Tabs>{tabs.map((t, i) => <Tab key={t} $on={i === 9}>{t}</Tab>)}</Tabs>
          <Tools>
            <Tool $low><TrashArt />Trash</Tool>
            {items.map(([label, marks, art], i) => (
              <Tool key={i}>
                <svg width="30" height="30" viewBox="0 0 30 30" fill="none" overflow="hidden">
                  {art}
                  {marks.includes("s") && <Square />}
                  {marks.includes("a") && <Yellow />}
                </svg>
                {label}
              </Tool>
            ))}
          </Tools>
        </ShelfBody>
      </Shelf>
    </App_>
  );
}
